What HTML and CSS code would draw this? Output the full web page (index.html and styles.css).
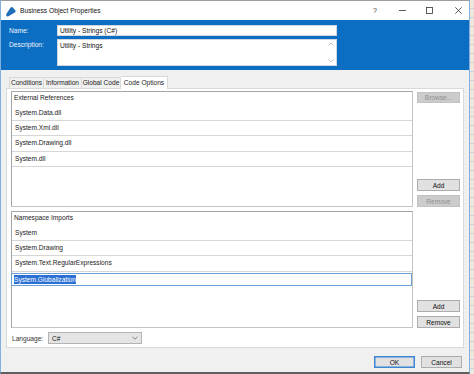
FILE: index.html
```html
<!DOCTYPE html>
<html lang="en">
<head>
    <meta charset="UTF-8">
    <title>Business Object Properties</title>
    <link rel="stylesheet" href="styles.css">
</head>
<body>
<div class="screen">
    <div class="window">
        <!-- title bar -->
        <div class="titlebar">
            <svg class="app-icon" width="11" height="11" viewBox="0 0 11 11">
                <path d="M1 8.6 L5.6 1.6 Q6.6 0.4 7.8 1.4 L10.4 4.6 Q11 5.8 9.9 6.6 L3 10.4 Q1.4 11 1 8.6 Z" fill="#1f6cb8"/>
            </svg>
            <span class="title">Business Object Properties</span>
            <div class="controls">
                <span class="help">?</span>
                <svg width="7" height="7" viewBox="0 0 7 7"><path d="M0 3.5 H7" stroke="#333" stroke-width="0.8"/></svg>
                <svg width="7" height="7" viewBox="0 0 7 7"><rect x="0.5" y="0.5" width="6" height="6" fill="none" stroke="#333" stroke-width="0.8"/></svg>
                <svg width="7" height="7" viewBox="0 0 7 7"><path d="M0.3 0.3 L6.7 6.7 M6.7 0.3 L0.3 6.7" stroke="#333" stroke-width="0.8"/></svg>
            </div>
        </div>

        <!-- blue header -->
        <div class="header">
            <span class="hlabel">Name:</span>
            <div class="field">Utility - Strings (C#)</div>
            <span class="hlabel">Description:</span>
            <div class="field area">
                <span class="area-text">Utility - Strings</span>
                <span class="scroll">
                    <svg width="6" height="4" viewBox="0 0 6 4"><path d="M0.5 3.5 L3 1 L5.5 3.5" fill="none" stroke="#b5b5b5" stroke-width="0.8"/></svg>
                    <svg width="6" height="4" viewBox="0 0 6 4"><path d="M0.5 0.5 L3 3 L5.5 0.5" fill="none" stroke="#b5b5b5" stroke-width="0.8"/></svg>
                </span>
            </div>
        </div>

        <div class="content">
            <div class="tabs">
                <span class="tab t1">Conditions</span>
                <span class="tab t2">Information</span>
                <span class="tab t3">Global Code</span>
                <span class="tab t4 active">Code Options</span>
            </div>

            <div class="panel">
                <div class="section ext">
                    <div class="list">
                        <div class="list-head">External References</div>
                        <div class="row">System.Data.dll</div>
                        <div class="row">System.Xml.dll</div>
                        <div class="row">System.Drawing.dll</div>
                        <div class="row">System.dll</div>
                    </div>
                    <div class="btn-col">
                        <button class="btn browse" disabled>Browse...</button>
                        <div class="spacer"></div>
                        <button class="btn">Add</button>
                        <button class="btn" disabled>Remove</button>
                    </div>
                </div>

                <div class="section ns">
                    <div class="list">
                        <div class="list-head">Namespace Imports</div>
                        <div class="row">System</div>
                        <div class="row">System.Drawing</div>
                        <div class="row">System.Text.RegularExpressions</div>
                        <div class="edit-row"><span class="sel">System.Globalization</span></div>
                    </div>
                    <div class="btn-col">
                        <div class="spacer"></div>
                        <button class="btn">Add</button>
                        <button class="btn">Remove</button>
                    </div>
                </div>

                <div class="lang-row">
                    <span class="lang-label">Language:</span>
                    <div class="combo">
                        <span>C#</span>
                        <svg width="6" height="4" viewBox="0 0 6 4"><path d="M0.5 0.8 L3 3.2 L5.5 0.8" fill="none" stroke="#666" stroke-width="0.8"/></svg>
                    </div>
                </div>
            </div>

            <div class="footer">
                <button class="btn default">OK</button>
                <button class="btn">Cancel</button>
            </div>
        </div>
    </div>
    <div class="desk"></div>
</div>
</body>
</html>
```

FILE: styles.css
```css
body {
    margin: 0;
    font-family: 'Liberation Sans', Arial, sans-serif;
    font-size: 6.6px;
    color: #1a1a1a;
}
.screen {
    display: flex;
    width: 474px;
    height: 374px;
    overflow: hidden;
}
.window {
    width: 470px;
    height: 374px;
    box-sizing: border-box;
    border-top: 1px solid #9c9c9c;
    border-left: 1px solid #7fb0de;
    border-right: 1px solid #7fb0de;
    border-bottom: 2px solid #5f5f5f;
    display: flex;
    flex-direction: column;
    background-color: #f0f0f0;
}
/* desktop strip on the right */
.desk {
    flex: 1;
    background: repeating-linear-gradient(180deg, #efe6dc 0, #efe6dc 8px, #c9d3df 8px, #c9d3df 9px);
}

/* title bar */
.titlebar {
    height: 19px;
    display: flex;
    align-items: center;
    background-color: #fff;
    padding-left: 4px;
}
.app-icon {
    margin-top: 1px;
}
.title {
    margin-left: 4px;
    font-size: 6.7px;
    color: #111;
}
.controls {
    margin-left: auto;
    display: flex;
    align-items: center;
    padding-right: 7px;
}
.controls .help {
    font-size: 7px;
    color: #333;
    margin-right: 22px;
}
.controls svg {
    margin-left: 20px;
}
.controls svg:first-of-type {
    margin-left: 0;
}
.controls svg:last-child {
    margin-left: 22px;
}

/* blue header */
.header {
    height: 50px;
    box-sizing: border-box;
    background-color: #0b6ec3;
    padding: 5px 0 4px 8px;
    display: grid;
    grid-template-columns: 48px 280px;
    grid-template-rows: 11px 27px;
    row-gap: 3px;
}
.hlabel {
    color: #eef5fc;
    line-height: 11px;
}
.field {
    background-color: #fff;
    border: 1px solid #cfd8e2;
    box-sizing: border-box;
    padding-left: 2px;
    line-height: 9px;
    color: #111;
}
.field.area {
    display: flex;
    padding-top: 1px;
}
.area-text {
    flex: 1;
}
.scroll {
    width: 10px;
    display: flex;
    flex-direction: column;
    justify-content: space-between;
    align-items: center;
    padding: 2px 0 2px;
    margin-top: -1px;
}

/* tabs */
.content {
    flex: 1;
    padding: 6px 5px 0 5px;
    display: flex;
    flex-direction: column;
}
.tabs {
    display: flex;
    align-items: flex-end;
    height: 12px;
    margin-left: 3px;
    position: relative;
    z-index: 1;
}
.tab {
    height: 11px;
    box-sizing: border-box;
    border: 1px solid #d9d9d9;
    border-bottom: none;
    border-left: none;
    background-color: #f0f0f0;
    text-align: center;
    line-height: 10px;
    color: #222;
}
.tab.t1 { width: 35px; border-left: 1px solid #d9d9d9; }
.tab.t2 { width: 38px; }
.tab.t3 { width: 39px; }
.tab.t4 { width: 47px; }
.tab.active {
    height: 13px;
    margin-bottom: -1px;
    background-color: #fff;
    line-height: 11px;
}

/* tab page */
.panel {
    height: 260px;
    box-sizing: border-box;
    background-color: #fff;
    border: 1px solid #d9d9d9;
    padding: 2px 3px 3px 4px;
    display: flex;
    flex-direction: column;
}
.section {
    display: flex;
    gap: 4px;
}
.section.ext {
    height: 116px;
}
.section.ns {
    height: 117px;
    margin-top: 4px;
}
.list {
    flex: 1;
    box-sizing: border-box;
    border: 1px solid #a5a5a5;
    border-right-color: #c4c4c4;
    border-bottom-color: #c4c4c4;
}
.list-head {
    height: 13.5px;
    line-height: 12px;
    padding-left: 2px;
}
.row {
    height: 15.4px;
    box-sizing: border-box;
    border-bottom: 1px solid #d6d6d6;
    line-height: 14px;
    padding-left: 3px;
}
.edit-row {
    height: 13px;
    margin: 1px 0 0 -1px;
    box-sizing: border-box;
    border: 1px solid #6d9fd6;
    line-height: 11px;
    padding-left: 2px;
}
.sel {
    background-color: #2a6fd3;
    color: #fff;
    padding: 1px 0;
}

/* buttons */
.btn-col {
    width: 43px;
    display: flex;
    flex-direction: column;
    gap: 4px;
}
.spacer {
    flex: 1;
}
.btn {
    height: 12px;
    padding: 0;
    box-sizing: border-box;
    font-family: inherit;
    font-size: 6.6px;
    background-color: #e1e1e1;
    border: 1px solid #adadad;
    color: #111;
}
.btn-col .btn {
    width: 43px;
}
.btn:disabled {
    background-color: #cccccc;
    border-color: #c2c2c2;
    color: #8e8e8e;
}
.btn.browse {
    margin-top: 1px;
    height: 11px;
}

/* language row */
.lang-row {
    height: 12px;
    margin-top: 4px;
    display: flex;
    align-items: center;
    padding-left: 1px;
}
.lang-label {
    width: 36px;
    color: #333;
}
.combo {
    width: 94px;
    height: 12px;
    box-sizing: border-box;
    background-color: #e5e5e5;
    border: 1px solid #b3b3b3;
    display: flex;
    align-items: center;
    justify-content: space-between;
    padding: 0 3px 0 3px;
}

/* footer */
.footer {
    display: flex;
    justify-content: flex-end;
    gap: 6px;
    padding: 8px 2px 0 0;
}
.footer .btn {
    width: 41px;
}
.btn.default {
    border-color: #3c86d3;
    box-shadow: inset 0 0 0 0.5px #3c86d3;
}
```
